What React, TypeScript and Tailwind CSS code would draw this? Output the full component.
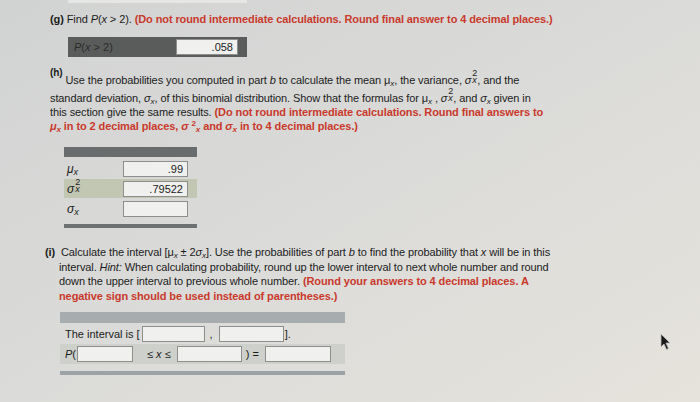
import React from 'react';

const red = 'text-[#c9392c]';

function Box({ w, value, className = '' }: { w: string; value?: string; className?: string }) {
  return (
    <div
      className={`${w} h-[16px] bg-[#f0f0ee] border border-[#8e8f8d] text-right pr-[4px] text-[11px] leading-[14px] text-[#1c1c1c] ${className}`}
    >
      {value}
    </div>
  );
}

function SigmaSq({ size = 'text-[11px]' }: { size?: string }) {
  return (
    <span className={`inline-flex items-center ${size}`}>
      <span className="italic">σ</span>
      <span className="inline-flex flex-col text-[9px] leading-[7px] ml-[1px] -mt-[6px]">
        <span>2</span>
        <span className="italic">x</span>
      </span>
    </span>
  );
}

function Sub({ base, italicBase = false }: { base: string; italicBase?: boolean }) {
  return (
    <span>
      <span className={italicBase ? 'italic' : ''}>{base}</span>
      <sub className="italic text-[8px]">x</sub>
    </span>
  );
}

export default function App() {
  return (
    <div className="relative w-[700px] h-[402px] overflow-hidden bg-gradient-to-br from-[#d1d3d2] via-[#dbdbd9] to-[#e6e3dc] font-['Liberation_Sans',Arial,sans-serif] text-[11px] text-[#1c1c1c] antialiased">
      <div className="ml-[68px] w-[179px] h-[3px] bg-[#e6e7e5]" />

      {/* (g) */}
      <p className="ml-[50px] mt-[9px] leading-[14px] tracking-[-0.1px]">
        <span className="font-bold">(g)</span> Find <span className="italic">P</span>(<span className="italic">x</span> &gt; 2).{' '}
        <span className={`font-bold ${red}`}>
          (Do not round intermediate calculations. Round final answer to 4 decimal places.)
        </span>
      </p>
      <div className="ml-[68px] mt-[11px] w-[179px] h-[20px] bg-[#5a5c5c] flex items-center justify-between pl-[6px] pr-[9px]">
        <span className="text-[#2a2b2b]">
          <span className="italic">P</span>(<span className="italic">x</span> &gt; 2)
        </span>
        <Box w="w-[62px]" value=".058" />
      </div>

      {/* (h) */}
      <div className="ml-[50px] mt-[13px] w-[540px] tracking-[-0.1px]">
        <div className="flex items-start">
          <span className="font-bold text-[10px] leading-[10px] -mt-[2px]">(h)</span>
          <span className="ml-[3px] mt-[3px] leading-[14px]">
            Use the probabilities you computed in part <span className="italic">b</span> to calculate the mean μ
            <sub className="italic text-[8px]">x</sub>, the variance, <SigmaSq />, and the
          </span>
        </div>
        <p className="leading-[14px] mt-[4px]">
          standard deviation, <Sub base="σ" italicBase />, of this binomial distribution. Show that the formulas for μ
          <sub className="italic text-[8px]">x</sub> , <SigmaSq />, and <Sub base="σ" italicBase /> given in
          <br />
          this section give the same results.{' '}
          <span className={`font-bold ${red}`}>
            (Do not round intermediate calculations. Round final answers to
            <br />
            <span className="italic">μ</span>
            <sub className="italic text-[8px]">x</sub> in to 2 decimal places, <span className="italic">σ</span>{' '}
            <sup className="text-[8px]">2</sup>
            <sub className="italic text-[8px]">x</sub> and <span className="italic">σ</span>
            <sub className="italic text-[8px]">x</sub> in to 4 decimal places.)
          </span>
        </p>
      </div>

      <div className="ml-[64px] mt-[14px] w-[133px]">
        <div className="h-[10px] bg-[#696c6d]" />
        <div className="h-[20px] flex items-center justify-between pl-[3px] pr-[9px] mt-[2px]">
          <span className="text-[12px]">
            <span className="italic">μ</span>
            <sub className="italic text-[9px]">x</sub>
          </span>
          <Box w="w-[65px]" value=".99" />
        </div>
        <div className="h-[19px] flex items-center justify-between pl-[3px] pr-[9px] bg-[#c2c7b3]">
          <SigmaSq size="text-[12px]" />
          <Box w="w-[65px]" value=".79522" />
        </div>
        <div className="h-[20px] flex items-center justify-between pl-[3px] pr-[9px] mt-[1px]">
          <span className="text-[12px]">
            <span className="italic">σ</span>
            <sub className="italic text-[9px]">x</sub>
          </span>
          <Box w="w-[65px]" />
        </div>
        <div className="h-[4px] bg-[#6e7172] mt-[5px]" />
      </div>

      {/* (i) */}
      <p className="ml-[45px] mt-[17px] w-[520px] leading-[14.5px] tracking-[-0.1px] pl-[14px] -indent-[14px]">
        <span className="font-bold">(i)</span>&nbsp; Calculate the interval [μ<sub className="italic text-[8px]">x</sub> ± 2
        <span className="italic">σ</span>
        <sub className="italic text-[8px]">x</sub>]. Use the probabilities of part <span className="italic">b</span> to find the
        probability that <span className="italic">x</span> will be in this interval. <span className="italic">Hint:</span> When
        calculating probability, round up the lower interval to next whole number and round down the upper interval to previous
        whole number.{' '}
        <span className={`font-bold ${red}`}>
          (Round your answers to 4 decimal places. A negative sign should be used instead of parentheses.)
        </span>
      </p>

      <div className="ml-[60px] mt-[9px] w-[285px]">
        <div className="h-[11px] bg-[#a7acaf]" />
        <div className="h-[20px] flex items-center pl-[5px] mt-[1px]">
          <span>The interval is [</span>
          <Box w="w-[63px]" className="ml-[2px]" />
          <span className="mx-[5px]">,</span>
          <Box w="w-[65px]" className="ml-[1px]" />
          <span className="ml-[1px]">].</span>
        </div>
        <div className="h-[20px] flex items-center pl-[5px] bg-[#ced1cb]">
          <span>
            <span className="italic">P</span>(
          </span>
          <Box w="w-[56px]" className="ml-[1px]" />
          <span className="ml-[14px]">
            ≤ <span className="italic">x</span> ≤
          </span>
          <Box w="w-[65px]" className="ml-[6px]" />
          <span className="ml-[4px]">) =</span>
          <Box w="w-[66px]" className="ml-[6px]" />
        </div>
        <div className="h-[4px] bg-[#9ca3a7] mt-[7px]" />
      </div>

      <svg className="absolute left-[659px] top-[333px]" width="14" height="18" viewBox="0 0 14 18">
        <path d="M2 1 L2 14 L5 11 L7.5 16.5 L9.5 15.5 L7 10 L11 10 Z" fill="#1c1c1c" stroke="#bfbfbf" strokeWidth="0.8" />
      </svg>
    </div>
  );
}
